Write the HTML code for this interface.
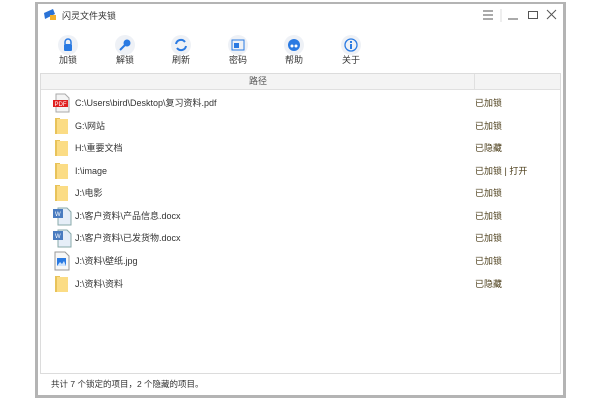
<!DOCTYPE html><html><head><meta charset="utf-8"><style>
*{margin:0;padding:0;box-sizing:border-box}
body{width:600px;height:400px;background:#fff;position:relative;font-family:"Liberation Sans","Noto Sans CJK SC",sans-serif;font-size:9px;color:#333;overflow:hidden}
.win{position:absolute;left:35px;top:2px;width:531px;height:396px;border:3px solid #b4b4b4;border-top-width:2px;background:#fff}
.title{position:absolute;left:62px;top:9px;font-size:9px;color:#333}
.tb{position:absolute;top:35px;width:40px;text-align:center;font-size:9px;color:#333;line-height:11px}
.tb .ic{width:20px;height:20px;border-radius:50%;background:#eef1f6;margin:0 auto 0;display:flex;align-items:center;justify-content:center}
.list{position:absolute;left:40px;top:73px;width:521px;height:301px;border:1px solid #dcdcdc}
.hdr{height:16px;background:#f4f4f4;border-bottom:1px solid #e0e0e0;position:relative;font-size:9px;color:#555;line-height:15px}
.row{position:absolute;left:0;width:519px;height:22px;font-size:9px;line-height:12px}
.row .p{position:absolute;left:34px;top:4px}
.row .s{position:absolute;left:434px;top:4px;color:#4a3c18}
.row .i{position:absolute;left:12px;top:0px}
.status{position:absolute;left:51px;top:378px;font-size:8.5px;color:#333}
</style></head><body>
<div class="win"></div>
<svg style="position:absolute;left:43px;top:8px" width="14" height="13"><path d="M1 5 L10 1 L12 6 L2 11Z" fill="#2a72d6"/><rect x="7" y="7" width="6" height="5" fill="#f3b02c"/></svg>
<div class="title">闪灵文件夹锁</div>
<svg style="position:absolute;left:480px;top:8px" width="85" height="14" stroke="#555" fill="none" stroke-width="1"><path d="M3 3h10M3 7h10M3 11h10"/><path d="M21 1v13" stroke="#ddd"/><path d="M28 11h10"/><rect x="48.5" y="3.5" width="9" height="7"/><path d="M67 2l9 9M76 2l-9 9"/></svg>
<div class="tb" style="left:48px"><div class="ic"><svg width="12" height="14"><path d="M3 6V4a3 3 0 0 1 6 0v2" stroke="#2a7ae2" stroke-width="1.5" fill="none"/><rect x="2" y="6" width="8" height="7" rx="1" fill="#2a7ae2"/></svg></div>加锁</div>
<div class="tb" style="left:105px"><div class="ic"><svg width="14" height="14"><circle cx="9" cy="5" r="3.5" fill="#2a7ae2"/><path d="M7 7L2 12" stroke="#2a7ae2" stroke-width="2"/></svg></div>解锁</div>
<div class="tb" style="left:161px"><div class="ic"><svg width="14" height="14" fill="none" stroke="#2a7ae2" stroke-width="2"><path d="M2 6a5 5 0 0 1 9-2"/><path d="M12 8a5 5 0 0 1-9 2"/></svg></div>刷新</div>
<div class="tb" style="left:218px"><div class="ic"><svg width="14" height="12"><rect x="1" y="1" width="12" height="10" fill="none" stroke="#2a7ae2"/><rect x="3" y="4" width="5" height="5" fill="#2a7ae2"/></svg></div>密码</div>
<div class="tb" style="left:274px"><div class="ic"><svg width="14" height="14"><circle cx="7" cy="7" r="6" fill="#2a7ae2"/><circle cx="5" cy="8" r="1.5" fill="#fff"/><circle cx="9" cy="8" r="1.5" fill="#fff"/></svg></div>帮助</div>
<div class="tb" style="left:331px"><div class="ic"><svg width="14" height="14"><circle cx="7" cy="7" r="6" fill="none" stroke="#2a7ae2" stroke-width="1.3"/><rect x="6" y="6" width="2" height="5" fill="#2a7ae2"/><rect x="6" y="3" width="2" height="2" fill="#2a7ae2"/></svg></div>关于</div>
<div class="list"><div class="hdr"><span style="position:absolute;left:208px;top:0">路径</span><span style="position:absolute;left:433px;top:0;height:15px;border-left:1px solid #e0e0e0"></span></div>
<div class="row" style="top:19px"><svg class="i" width="18" height="20"><path d="M3 1h9l4 4v14H3z" fill="#f4f4f4" stroke="#aaa"/><rect x="0" y="7" width="15" height="7" fill="#e02020"/><text x="1.5" y="13" font-size="6" fill="#fff" font-family="Liberation Sans">PDF</text></svg><span class="p">C:\Users\bird\Desktop\复习资料.pdf</span><span class="s">已加锁</span></div>
<div class="row" style="top:42px"><svg class="i" width="18" height="20"><path d="M2 2h5v16H2z" fill="#e8c35a"/><path d="M4 3h11v15H4z" fill="#fbdc85"/></svg><span class="p">G:\网站</span><span class="s">已加锁</span></div>
<div class="row" style="top:64px"><svg class="i" width="18" height="20"><path d="M2 2h5v16H2z" fill="#e8c35a"/><path d="M4 3h11v15H4z" fill="#fbdc85"/></svg><span class="p">H:\重要文档</span><span class="s">已隐藏</span></div>
<div class="row" style="top:87px"><svg class="i" width="18" height="20"><path d="M2 2h5v16H2z" fill="#e8c35a"/><path d="M4 3h11v15H4z" fill="#fbdc85"/></svg><span class="p">I:\image</span><span class="s">已加锁 | 打开</span></div>
<div class="row" style="top:109px"><svg class="i" width="18" height="20"><path d="M2 2h5v16H2z" fill="#e8c35a"/><path d="M4 3h11v15H4z" fill="#fbdc85"/></svg><span class="p">J:\电影</span><span class="s">已加锁</span></div>
<div class="row" style="top:132px"><svg class="i" width="20" height="20"><path d="M5 2h9l4 4v13H5z" fill="#e6eef8" stroke="#8aa"/><rect x="0" y="3" width="10" height="9" fill="#4a7cc0"/><text x="2" y="10" font-size="6" fill="#fff" font-family="Liberation Sans">W</text></svg><span class="p">J:\客户资料\产品信息.docx</span><span class="s">已加锁</span></div>
<div class="row" style="top:154px"><svg class="i" width="20" height="20"><path d="M5 2h9l4 4v13H5z" fill="#e6eef8" stroke="#8aa"/><rect x="0" y="3" width="10" height="9" fill="#4a7cc0"/><text x="2" y="10" font-size="6" fill="#fff" font-family="Liberation Sans">W</text></svg><span class="p">J:\客户资料\已发货物.docx</span><span class="s">已加锁</span></div>
<div class="row" style="top:177px"><svg class="i" width="18" height="20"><path d="M2 1h10l4 4v14H2z" fill="#f7f7f7" stroke="#999"/><rect x="4" y="7" width="9" height="8" fill="#2a7ae2"/><path d="M4 15l3-4 2 2 2-3 2 5z" fill="#cfe3fb"/></svg><span class="p">J:\资料\壁纸.jpg</span><span class="s">已加锁</span></div>
<div class="row" style="top:200px"><svg class="i" width="18" height="20"><path d="M2 2h5v16H2z" fill="#e8c35a"/><path d="M4 3h11v15H4z" fill="#fbdc85"/></svg><span class="p">J:\资料\资料</span><span class="s">已隐藏</span></div>
</div>
<div class="status">共计 7 个锁定的项目，2 个隐藏的项目。</div>
</body></html>
